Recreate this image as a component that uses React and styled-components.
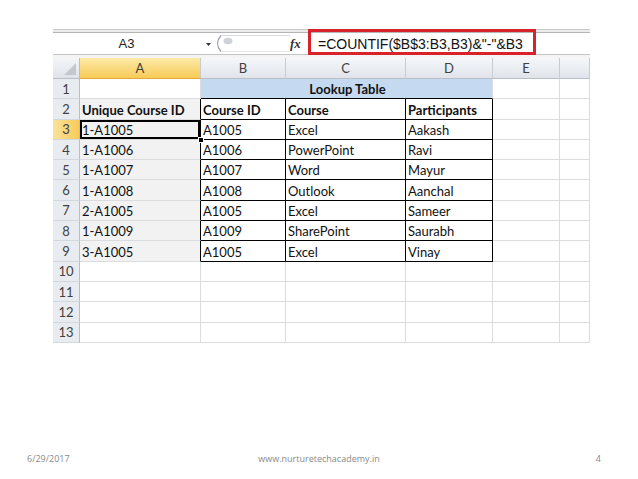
import React from "react";
import styled, { createGlobalStyle, css } from "styled-components";

const GlobalStyle = createGlobalStyle`
  html, body { margin: 0; padding: 0; background: #fff; }
  body { font-family: Lato, "Liberation Sans", sans-serif; }
`;

const Page = styled.div`
  width: 638px;
  height: 479px;
  display: flex;
  flex-direction: column;
  overflow: hidden;
`;

const Shot = styled.div`
  width: 537px;
  margin: 29px 0 0 53px;
`;

const TopStrip = styled.div`
  height: 2px;
  border-top: 1px solid #c9c9c9;
  border-bottom: 1px solid #b5b5b5;
  background: #ececec;
`;

const FormulaBar = styled.div`
  position: relative;
  height: 21px;
  display: flex;
  align-items: center;
  border-bottom: 1px solid #c4c4c4;
  background: #fff;
`;

const NameBox = styled.div`
  width: 147px;
  text-align: center;
  font-family: "Liberation Sans", sans-serif;
  font-size: 13px;
  color: #222;
`;

const Grip = styled.div`
  width: 90px;
  height: 21px;
  display: flex;
  align-items: center;
`;

const Fx = styled.div`
  width: 22px;
  font-family: "Liberation Serif", serif;
  font-style: italic;
  font-weight: bold;
  font-size: 13px;
  color: #333;
`;

const FormulaText = styled.div`
  padding-left: 6px;
  font-family: "Liberation Sans", sans-serif;
  font-size: 14px;
  color: #111;
  white-space: nowrap;
`;

const RedFrame = styled.div`
  position: absolute;
  left: 255px;
  top: -4px;
  width: 222px;
  height: 20px;
  border: 3px solid #d8232a;
  pointer-events: none;
`;

const Spacer = styled.div`
  height: 3px;
  background: #f4f4f4;
`;

const Sheet = styled.div`
  display: grid;
  grid-template-columns: 27px 121px 85px 120px 87px 67px 30px;
  grid-template-rows: 21px repeat(13, 20.3px);
`;

const Corner = styled.div`
  position: relative;
  background: linear-gradient(#f3f5f8, #dfe3e9);
  border-right: 1px solid #b8bec6;
  border-bottom: 1px solid #b8bec6;
  &::after {
    content: "";
    position: absolute;
    right: 3px;
    bottom: 3px;
    border-left: 12px solid transparent;
    border-bottom: 12px solid #c3c8cf;
  }
`;

const ColHead = styled.div`
  display: flex;
  align-items: center;
  justify-content: center;
  font-size: 13px;
  color: #404040;
  border-right: 1px solid #c7ccd3;
  border-bottom: 1px solid #b8bec6;
  background: ${(p) =>
    p.$active
      ? "linear-gradient(#fdeaa8, #f7cb57)"
      : "linear-gradient(#f5f7fa, #e0e4ea)"};
  ${(p) => p.$active && css`border-bottom-color: #e2a93a;`}
`;

const RowHead = styled.div`
  display: flex;
  align-items: center;
  justify-content: center;
  font-size: 13px;
  color: #404040;
  border-right: 1px solid #b8bec6;
  border-bottom: 1px solid #d3d8de;
  background: ${(p) => (p.$active ? "linear-gradient(90deg, #fbe29a, #f6cb5a)" : "#e8ecf1")};
`;

const Cell = styled.div`
  position: relative;
  display: flex;
  align-items: flex-end;
  justify-content: ${(p) => (p.$center ? "center" : "flex-start")};
  padding: 0 0 1px 2px;
  font-size: 13px;
  font-weight: ${(p) => (p.$bold ? 700 : 400)};
  color: #111;
  white-space: nowrap;
  overflow: visible;
  background: ${(p) => p.$fill || "#fff"};
  border-right: 1px solid ${(p) => (p.$edgeRight ? "#000" : "#dadcdf")};
  border-bottom: 1px solid ${(p) => (p.$edgeBottom ? "#000" : "#dadcdf")};
  ${(p) => p.$span && css`grid-column: span ${p.$span};`}
  ${(p) =>
    p.$selected &&
    css`
      box-shadow: inset 0 0 0 2px #000;
      &::after {
        content: "";
        position: absolute;
        right: -4px;
        bottom: -4px;
        width: 4px;
        height: 4px;
        background: #000;
        border: 1px solid #fff;
        z-index: 2;
      }
    `}
`;

const Footer = styled.div`
  margin-top: auto;
  height: 27px;
  display: flex;
  align-items: flex-start;
  font-family: "Open Sans", "Liberation Sans", sans-serif;
  font-size: 9px;
  color: #8a8a8a;
`;

const FootSide = styled.div`
  width: 160px;
  padding: ${(p) => (p.$right ? "0 37px 0 0" : "0 0 0 27px")};
  text-align: ${(p) => (p.$right ? "right" : "left")};
  box-sizing: border-box;
`;

const FootMid = styled.div`
  flex: 1;
  text-align: center;
`;

const columns = ["A", "B", "C", "D", "E", ""];

const lookup = [
  ["1-A1005", "A1005", "Excel", "Aakash"],
  ["1-A1006", "A1006", "PowerPoint", "Ravi"],
  ["1-A1007", "A1007", "Word", "Mayur"],
  ["1-A1008", "A1008", "Outlook", "Aanchal"],
  ["2-A1005", "A1005", "Excel", "Sameer"],
  ["1-A1009", "A1009", "SharePoint", "Saurabh"],
  ["3-A1005", "A1005", "Excel", "Vinay"],
];

const GREY = "#f2f2f2";
const BLUE = "#c5d9f1";

function GripIcon() {
  return (
    <svg width="90" height="21" viewBox="0 0 90 21">
      <path d="M6 10 l5 0 l-2.5 3 z" fill="#333" />
      <path d="M21 2.5 q-7 8 0 16" stroke="#9aa0a8" strokeWidth="1.2" fill="none" />
      <path d="M21 2.5 L90 2.5" stroke="#d6d9dd" strokeWidth="1" />
      <path d="M21 18.5 L90 18.5" stroke="#e4e6e9" strokeWidth="1" />
      <ellipse cx="28" cy="8" rx="4.5" ry="3.2" fill="#d0d4d9" />
    </svg>
  );
}

function DataRow({ n, row }) {
  const [a, b, c, d] = row;
  const header = n === 2;
  return (
    <>
      <RowHead $active={n === 3}>{n}</RowHead>
      <Cell $fill={GREY} $bold={header} $edgeRight $selected={n === 3}>{a}</Cell>
      <Cell $bold={header} $edgeRight $edgeBottom>{b}</Cell>
      <Cell $bold={header} $edgeRight $edgeBottom>{c}</Cell>
      <Cell $bold={header} $edgeRight $edgeBottom>{d}</Cell>
      <Cell />
      <Cell />
    </>
  );
}

function BlankRow({ n }) {
  return (
    <>
      <RowHead>{n}</RowHead>
      {columns.map((c, i) => (
        <Cell key={i} />
      ))}
    </>
  );
}

export default function App() {
  return (
    <Page>
      <GlobalStyle />
      <Shot>
        <TopStrip />
        <FormulaBar>
          <NameBox>A3</NameBox>
          <Grip>
            <GripIcon />
          </Grip>
          <Fx>fx</Fx>
          <FormulaText>=COUNTIF($B$3:B3,B3)&amp;"-"&amp;B3</FormulaText>
          <RedFrame />
        </FormulaBar>
        <Spacer />
        <Sheet>
          <Corner />
          {columns.map((c, i) => (
            <ColHead key={i} $active={c === "A"}>{c}</ColHead>
          ))}

          <RowHead>1</RowHead>
          <Cell />
          <Cell $span={3} $fill={BLUE} $bold $center $edgeBottom>Lookup Table</Cell>
          <Cell />
          <Cell />

          <DataRow n={2} row={["Unique Course ID", "Course ID", "Course", "Participants"]} />
          {lookup.map((row, i) => (
            <DataRow key={i} n={i + 3} row={row} />
          ))}
          {[10, 11, 12, 13].map((n) => (
            <BlankRow key={n} n={n} />
          ))}
        </Sheet>
      </Shot>
      <Footer>
        <FootSide>6/29/2017</FootSide>
        <FootMid>www.nurturetechacademy.in</FootMid>
        <FootSide $right>4</FootSide>
      </Footer>
    </Page>
  );
}
